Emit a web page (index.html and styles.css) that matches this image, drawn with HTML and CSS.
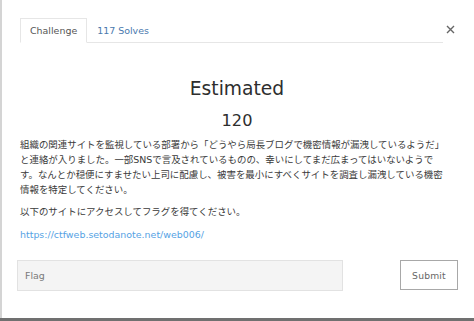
FILE: index.html
```html
<!DOCTYPE html>
<html lang="ja">
<head>
  <meta charset="UTF-8">
  <meta name="viewport" content="width=device-width, initial-scale=1.0">
  <title>Estimated</title>
  <link rel="stylesheet" href="styles.css">
</head>
<body>
  <div class="modal">
    <button class="close" aria-label="Close">
      <svg width="9" height="9" viewBox="0 0 9 9">
        <path d="M1 1 L8 8 M8 1 L1 8" stroke="#666" stroke-width="1.4" fill="none"/>
      </svg>
    </button>
    <div class="modal-body">
      <ul class="nav-tabs">
        <li class="tab active">Challenge</li>
        <li class="tab"><a href="#">117 Solves</a></li>
      </ul>
      <div class="tab-pane">
        <h2 class="challenge-name">Estimated</h2>
        <h3 class="challenge-value">120</h3>
        <div class="challenge-desc">
          <p>組織の関連サイトを監視している部署から「どうやら局長ブログで機密情報が漏洩しているようだ」と連絡が入りました。一部SNSで言及されているものの、幸いにしてまだ広まってはいないようです。なんとか穏便にすませたい上司に配慮し、被害を最小にすべくサイトを調査し漏洩している機密情報を特定してください。</p>
          <p>以下のサイトにアクセスしてフラグを得てください。</p>
          <p><a href="#">https://ctfweb.setodanote.net/web006/</a></p>
        </div>
        <form class="submit-row">
          <input type="text" class="flag-input" placeholder="Flag">
          <button type="button" class="submit-btn">Submit</button>
        </form>
      </div>
    </div>
  </div>
</body>
</html>
```

FILE: styles.css
```css
body {
  margin: 0;
  background-color: #707070;
  font-family: "DejaVu Sans", "Noto Sans CJK JP", sans-serif;
  font-size: 9.45px;
  color: #333;
}

.modal {
  position: relative;
  height: 318px;
  background-color: #fff;
  border-left: 2px solid #d4d4d4;
  overflow: hidden;
}

.close {
  position: absolute;
  top: 21px;
  left: 443px;
  width: 11px;
  height: 11px;
  padding: 1px;
  border: none;
  background: none;
  cursor: pointer;
}

.modal-body {
  padding: 18px 20px 0 18px;
}

.nav-tabs {
  display: flex;
  list-style: none;
  margin: 0 11px 0 0;
  padding: 0;
  border-bottom: 1px solid #e6e6e6;
}

.tab {
  margin-bottom: -1px;
  padding: 0 9px;
  line-height: 23px;
  border: 1px solid transparent;
  color: #555;
}

.tab.active {
  border-color: #e6e6e6 #e6e6e6 #fff;
}

.tab a {
  color: #4a79ae;
  text-decoration: none;
}

.challenge-name {
  margin: 35px 0 10.5px;
  text-align: center;
  font-size: 18.7px;
  font-weight: normal;
  line-height: 22px;
  color: #2e2e2e;
}

.challenge-value {
  margin: 0 0 7px;
  text-align: center;
  font-size: 16.2px;
  font-weight: normal;
  line-height: 19px;
  color: #2e2e2e;
}

.challenge-desc {
  padding-right: 4px;
}

.challenge-desc p {
  margin: 0 0 7.5px;
  line-height: 15px;
  color: #3a3a3a;
}

.challenge-desc p:last-child {
  margin-bottom: 0;
}

.challenge-desc a {
  color: #55a2e4;
  text-decoration: none;
}

.submit-row {
  display: flex;
  justify-content: space-between;
  margin: 18.5px -4px 0 -3px;
}

.flag-input {
  box-sizing: border-box;
  width: 326px;
  height: 31px;
  padding: 0 7px;
  border: 1px solid #e2e2e2;
  background-color: #f4f4f4;
  font-family: "DejaVu Sans", sans-serif;
  font-size: 9.45px;
  color: #333;
}

.flag-input::placeholder {
  color: #7a7a7a;
}

.submit-btn {
  box-sizing: border-box;
  width: 58px;
  height: 30px;
  padding: 0;
  border: 1px solid #a8a8a8;
  background-color: #fff;
  font-family: "DejaVu Sans", sans-serif;
  font-size: 9.2px;
  color: #666;
  letter-spacing: 0.2px;
  cursor: pointer;
}
```
